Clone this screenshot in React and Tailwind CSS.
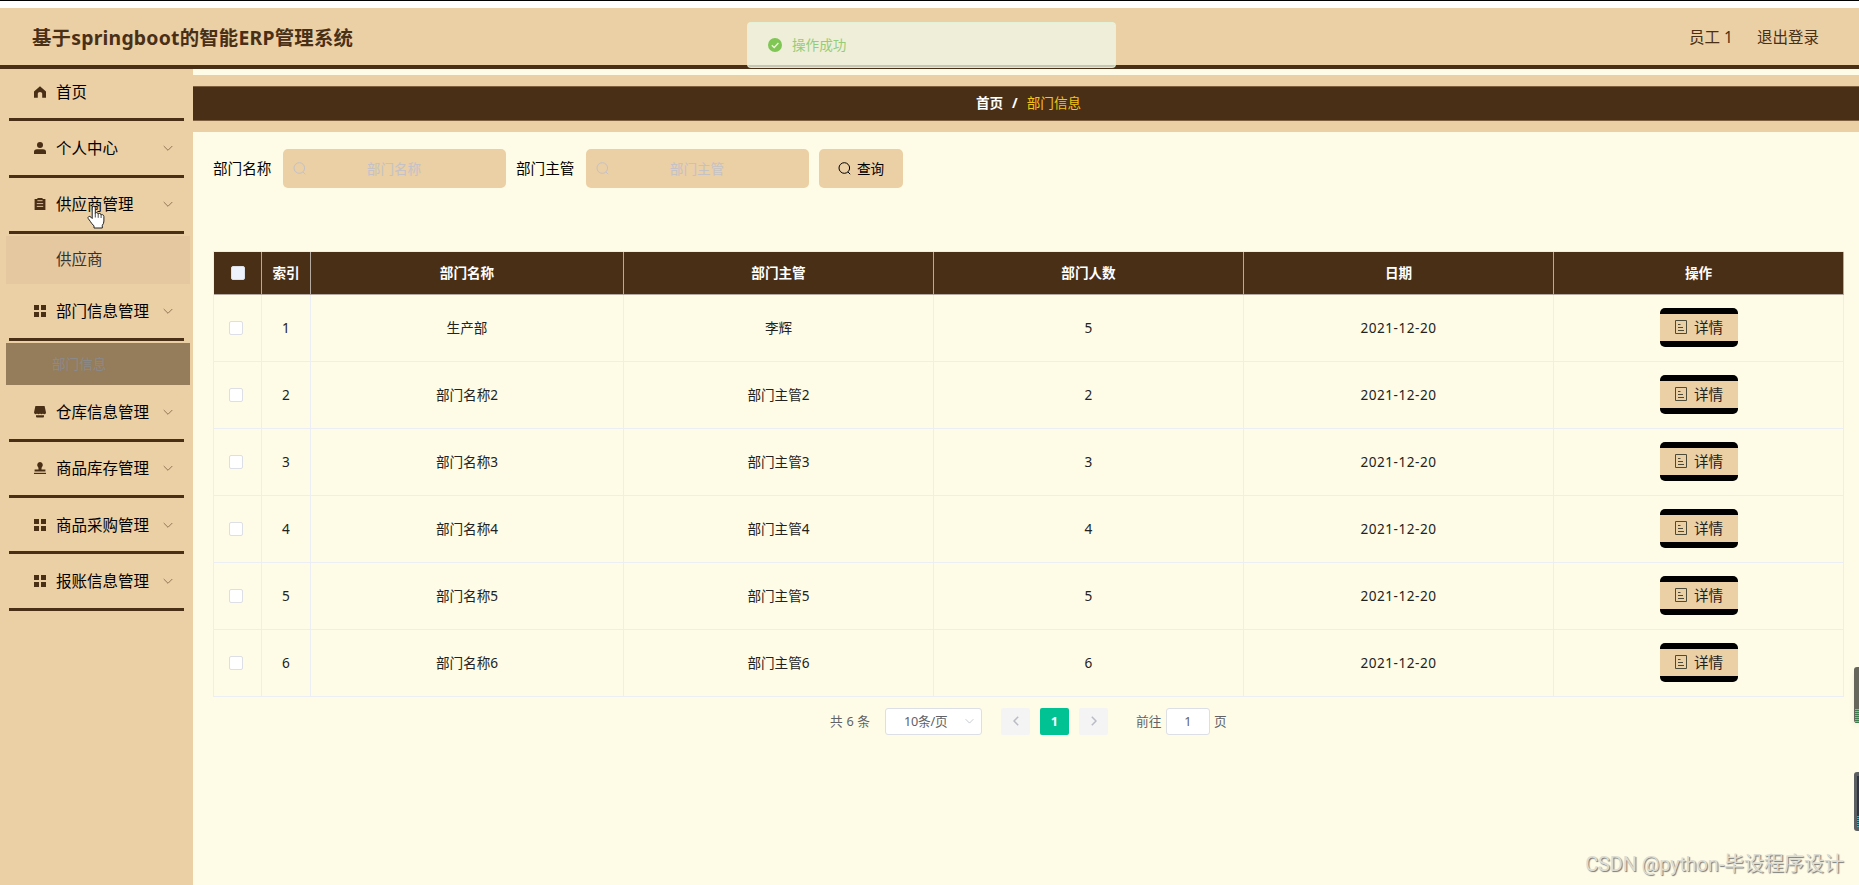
import { useState } from 'react'

const menus = [
  { title: '首页', icon: 'home' },
  { title: '个人中心', icon: 'user' },
  { title: '供应商管理', icon: 'order', child: '供应商' },
  { title: '部门信息管理', icon: 'menu', child: '部门信息' },
  { title: '仓库信息管理', icon: 'shop' },
  { title: '商品库存管理', icon: 'stamp' },
  { title: '商品采购管理', icon: 'menu' },
  { title: '报账信息管理', icon: 'menu' }
]

const rows = [
  { id: 1, name: '生产部', leader: '李辉', count: 5, date: '2021-12-20' },
  { id: 2, name: '部门名称2', leader: '部门主管2', count: 2, date: '2021-12-20' },
  { id: 3, name: '部门名称3', leader: '部门主管3', count: 3, date: '2021-12-20' },
  { id: 4, name: '部门名称4', leader: '部门主管4', count: 4, date: '2021-12-20' },
  { id: 5, name: '部门名称5', leader: '部门主管5', count: 5, date: '2021-12-20' },
  { id: 6, name: '部门名称6', leader: '部门主管6', count: 6, date: '2021-12-20' }
]

const columns = ['索引', '部门名称', '部门主管', '部门人数', '日期', '操作']

const gridCols = 'grid grid-cols-[48px_49px_313px_310px_310px_310px_290px]'

const MenuIcon = ({ name }) => (
  <svg viewBox="0 0 12 12" className="w-3 h-3 shrink-0 fill-[#4a2f17]">
    {name === 'home' && <path d="M6 0.3 0 5.4V11.7H3.8V7.6Q3.8 6 6 6T8.2 7.6V11.7H12V5.4Z" />}
    {name === 'user' && (
      <>
        <circle cx="6" cy="3" r="3" />
        <path d="M0 12V10Q0 7.2 3 7.2H9Q12 7.2 12 10V12Z" />
      </>
    )}
    {name === 'order' && (
      <>
        <path d="M0.6 1H3.4V0H8.6V1H11.4V12H0.6Z" />
        <path d="M3.4 2.7H8.6M2.8 5.6H9.2M2.8 8.4H9.2" stroke="#ebcfa5" strokeWidth="0.9" />
      </>
    )}
    {name === 'menu' && <path d="M0 0H5V5H0ZM7 0H12V5H7ZM0 7H5V12H0ZM7 7H12V12H7Z" />}
    {name === 'shop' && (
      <>
        <path d="M1.4 0H10.6L12 6.5Q12 8.2 10.5 8.2T9 7.5Q8.5 8.2 7.5 8.2T6 7.5Q5.5 8.2 4.5 8.2T3 7.5Q2.5 8.2 1.5 8.2T0 6.5Z" />
        <path d="M2 9.2H10V10.6Q10 11.5 9 11.5H3Q2 11.5 2 10.6Z" />
      </>
    )}
    {name === 'stamp' && (
      <>
        <path d="M6 0A3 3 0 0 1 8.2 4.8Q7.3 5.7 7.5 7.4H11.4V9.6H0.6V7.4H4.5Q4.7 5.7 3.8 4.8A3 3 0 0 1 6 0Z" />
        <path d="M0 10.8H12V12H0Z" />
      </>
    )}
  </svg>
)

const SearchIcon = () => (
  <svg viewBox="0 0 13 13" className="w-[13px] h-[13px] shrink-0" fill="none" stroke="currentColor">
    <circle cx="6.3" cy="6" r="5.3" />
    <path d="M10 10 12.2 12.2" />
  </svg>
)

const Arrow = ({ className, d = 'M0.7 1 5 5.3 9.3 1' }) => (
  <svg viewBox="0 0 10 6" className={className} fill="none" stroke="currentColor">
    <path d={d} />
  </svg>
)

const Sidebar = () => (
  <aside className="w-[193px] shrink-0 bg-[#ebcfa5]">
    <ul className="-mt-[4.2px]">
      {menus.map((item) => (
        <li key={item.title}>
          <div className="h-[56.4px] ml-[8.5px] mr-[9.3px] pl-[25.5px] pr-[11px] flex items-center border-b-3 border-[#4a2f17] text-[15.5px] text-black">
            <MenuIcon name={item.icon} />
            <span className="ml-[10px] leading-5">{item.title}</span>
            {item.icon !== 'home' && <Arrow className="ml-auto w-[10px] h-[6px] text-[#8f7755]" />}
          </div>
          {item.child === '供应商' && (
            <div className="mt-[1.8px] ml-[6px] mr-[2.7px] h-[48.6px] flex items-center pl-[50px] bg-[#e6c8a0] text-[15.5px] text-[#333]">
              {item.child}
            </div>
          )}
          {item.child === '部门信息' && (
            <div className="mt-[1.8px] ml-[6px] mr-[2.7px] h-[42.6px] flex items-center pl-[46px] bg-[#957c5a] text-[13.6px] text-[#8a8a8a]">
              {item.child}
            </div>
          )}
        </li>
      ))}
    </ul>
  </aside>
)

const SearchField = ({ label }) => (
  <label className="flex items-center">
    <span className="w-[70px] text-[14.6px] text-black">{label}</span>
    <span className="flex items-center w-[223px] h-[39px] pl-[10px] pr-[24px] rounded-[5px] bg-[#ebcfa5] text-[#c4c2c6]">
      <SearchIcon />
      <input
        placeholder={label}
        className="w-0 flex-1 text-center text-[13.6px] outline-none placeholder:text-[#c4c2c6]"
      />
    </span>
  </label>
)

const CheckBox = () => <span className="block w-[14px] h-[14px] rounded-[2px] border border-[#dcdfe6] bg-white" />

const DetailButton = () => (
  <button className="w-[78px] h-[39px] flex items-center justify-center gap-[7px] rounded-[5px] border-y-6 border-black bg-[#ebcfa5] text-[14.6px] text-[#222]">
    <svg viewBox="0 0 12 14" className="w-3 h-[14px]" fill="none" stroke="#4c4a38">
      <path d="M0.5 0.5H11.5V13.5H0.5Z" />
      <path d="M3 4.5H5.5M3 7.5H8M3 10.5H9" />
    </svg>
    <span className="leading-5">详情</span>
  </button>
)

const DataTable = () => (
  <div className="w-[1631px] text-[13.6px] border-l border-t border-[#ebeef5]">
    <div className={`${gridCols} h-[43px] bg-[#4a2f17] font-bold text-white`}>
      <div className="flex items-center justify-center border-r border-b border-[#b5aaa2]">
        <span className="w-[14px] h-[14px] rounded-[2px] border border-[#dcdfe6] bg-[#edf2fc]" />
      </div>
      {columns.map((col) => (
        <div key={col} className="flex items-center justify-center border-r border-b border-[#b5aaa2]">
          {col}
        </div>
      ))}
    </div>
    {rows.map((row) => (
      <div key={row.id} className={`${gridCols} h-[67px] text-[#222]`}>
        <div className="flex items-center justify-center pr-1 border-r border-b border-[#ebeef5]">
          <CheckBox />
        </div>
        {[row.id, row.name, row.leader, row.count].map((value, idx) => (
          <div key={idx} className="flex items-center justify-center pt-px border-r border-b border-[#ebeef5]">
            {value}
          </div>
        ))}
        <div className="flex items-center justify-center pt-px border-r border-b border-[#ebeef5] tracking-[0.5px]">
          {row.date}
        </div>
        <div className="flex items-center justify-center pl-px pb-px border-r border-b border-[#ebeef5]">
          <DetailButton />
        </div>
      </div>
    ))}
  </div>
)

const Pagination = ({ page, setPage }) => (
  <div className="mt-[11px] ml-[617px] flex items-center text-[12.7px] text-[#606266]">
    <span className="w-[55px] tracking-[0.2px]">共 6 条</span>
    <div className="w-[97px] h-[27px] flex items-center pl-[18px] pr-[7px] rounded-[3px] border border-[#dcdfe6] bg-white tracking-[-0.2px]">
      10条/页
      <Arrow className="ml-auto w-[9px] h-[6px] text-[#c0c4cc]" />
    </div>
    <button className="ml-[19px] w-[29px] h-[27px] grid place-items-center rounded-[2px] bg-[#f4f4f5] text-[#b9bcc4]">
      <svg viewBox="0 0 6 10" className="w-[6px] h-[10px]" fill="none" stroke="currentColor" strokeWidth="1.5">
        <path d="M5.2 0.8 1 5 5.2 9.2" />
      </svg>
    </button>
    <button
      onClick={() => setPage(1)}
      className="ml-[10px] w-[29px] h-[27px] rounded-[2px] bg-[#00c292] font-bold text-white"
    >
      {page}
    </button>
    <button className="ml-[10px] w-[29px] h-[27px] grid place-items-center rounded-[2px] bg-[#f4f4f5] text-[#b9bcc4]">
      <svg viewBox="0 0 6 10" className="w-[6px] h-[10px]" fill="none" stroke="currentColor" strokeWidth="1.5">
        <path d="M0.8 0.8 5 5 0.8 9.2" />
      </svg>
    </button>
    <span className="ml-[28px] w-[30px]">前往</span>
    <span className="w-[44px] h-[27px] grid place-items-center rounded-[3px] border border-[#dcdfe6] bg-white">{page}</span>
    <span className="ml-[4px]">页</span>
  </div>
)

const App = () => {
  const [page, setPage] = useState(1)

  return (
    <div className="relative w-[1859px] h-[885px] overflow-hidden flex flex-col bg-[#fefce6] font-['Noto_Sans','Noto_Sans_CJK_SC',sans-serif]">
      <div className="h-2 shrink-0 border-t border-black bg-white" />
      <header className="h-[61px] shrink-0 flex items-center pl-8 pr-[40px] pt-[2px] border-b-4 border-[#4a2f17] bg-[#ebcfa5] text-[#4a2f17]">
        <h1 className="text-[19.4px] font-bold whitespace-nowrap tracking-[0.22px]">基于springboot的智能ERP管理系统</h1>
        <div className="ml-auto flex gap-6 text-[15.5px]">
          <span>员工 1</span>
          <span>退出登录</span>
        </div>
      </header>

      <div className="flex flex-1 min-h-0">
        <Sidebar />
        <main className="flex-1 min-w-0 pt-[6px]">
          <div className="py-[11px] bg-[#ebcfa5]">
            <nav className="h-[35px] flex items-center justify-center pl-[5px] border-y border-[#7c6040] bg-[#4a2f17] text-[13.6px] text-white">
              <b>首页</b>
              <b className="mx-[9px]">/</b>
              <span className="text-[#f5c518]">部门信息</span>
            </nav>
          </div>
          <div className="pl-5">
            <div className="mt-[17.4px] flex items-center gap-[10px]">
              <SearchField label="部门名称" />
              <SearchField label="部门主管" />
              <button className="w-[84px] h-[39px] flex items-center justify-center gap-[6px] rounded-[5px] bg-[#ebcfa5] text-[13.6px] text-black">
                <SearchIcon />
                查询
              </button>
            </div>
            <div className="mt-[62.6px]">
              <DataTable />
            </div>
            <Pagination page={page} setPage={setPage} />
          </div>
        </main>
      </div>

      {/* success message */}
      <div className="absolute left-[747px] top-[22px] w-[369px] h-[46px] flex items-center pl-[20px] rounded-[4px] border border-[#e1f3d8]/80 bg-[#f0f9eb]/75 text-[13.6px] text-[#95cc78]">
        <svg viewBox="0 0 14 14" className="w-[14px] h-[14px]">
          <circle cx="7" cy="7" r="7" fill="#7fc655" />
          <path d="M3.8 7.2 6.2 9.5 10.4 5" fill="none" stroke="#f0f3dc" strokeWidth="1.3" />
        </svg>
        <span className="ml-[10px]">操作成功</span>
      </div>

      {/* floating monitor widgets on the edge */}
      <div className="absolute left-[1854px] top-[667px] w-[5px] h-[56px] flex flex-col justify-end rounded-l-[3px] overflow-hidden bg-[#66665c] shadow-md">
        <div className="ml-px h-[14px] bg-[repeating-linear-gradient(#5fd080_0_1px,#3c7a4c_1px_2px)]" />
      </div>
      <div className="absolute left-[1854px] top-[772px] w-[5px] h-[59px] flex flex-col justify-end pl-[3px] py-1 rounded-l-[3px] bg-[#5b5f62]">
        <div className="flex-1 bg-[#2e3440]" />
        <div className="h-[11px] bg-[repeating-linear-gradient(#4fa8b8_0_1px,#2e4450_1px_2px)]" />
      </div>

      <div className="absolute right-[15px] top-[849px] leading-[30px] text-[20px] whitespace-nowrap text-[#dddcd2] [text-shadow:1px_1px_1px_#777] font-['Roboto','Noto_Sans_CJK_SC',sans-serif]">
        <span className="tracking-[-0.2px]">CSDN @python-</span>毕设程序设计
      </div>

      {/* mouse pointer */}
      <svg viewBox="0 0 18 24" className="absolute left-[87px] top-[205px] w-[18px] h-[24px]">
        <path
          d="M5.2 13.5V3Q5.2 1.2 6.8 1.2T8.3 3V8.5Q8.5 7.5 9.8 7.6T11.2 9Q11.6 8.2 12.8 8.4T14.1 10Q14.5 9.4 15.6 9.7T16.9 11.5V16Q16.9 18.5 15.3 20.3V23H7V20.8Q4.5 18.8 3.4 16.5L1.2 13.5Q0.6 12.3 1.7 11.6T4 12.2Z"
          fill="#fff"
          stroke="#222"
        />
        <path d="M8.3 8.5V12.5M11.2 9V12.8M14.1 10V13" stroke="#222" strokeWidth="0.8" />
      </svg>
    </div>
  )
}

export default App
